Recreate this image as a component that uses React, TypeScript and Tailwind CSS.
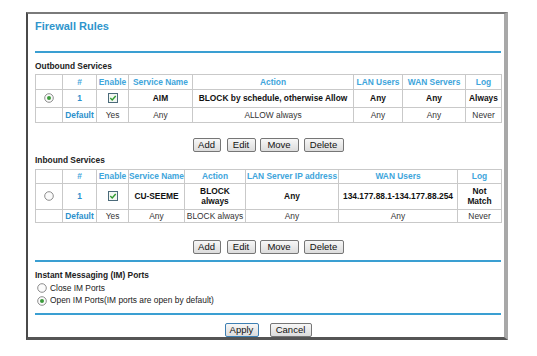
import React from "react";

const F = "font-['Liberation_Sans',Arial,sans-serif]";

function Radio({ checked }: { checked?: boolean }) {
  return (
    <svg width="10" height="10" viewBox="0 0 10 10" className="block">
      <circle cx="5" cy="5" r="4.3" fill="#fbfbfb" stroke="#808080" strokeWidth="0.9" />
      {checked && <circle cx="5" cy="5" r="2" fill="#3b9a3b" />}
    </svg>
  );
}

function Check() {
  return (
    <svg width="10" height="10" viewBox="0 0 10 10" className="block">
      <rect x="0.5" y="0.5" width="9" height="9" fill="#f2f7f2" stroke="#4b6a7a" />
      <path d="M2.3 5.1 L4.2 6.9 L7.7 3" fill="none" stroke="#2f9a2f" strokeWidth="1.4" />
    </svg>
  );
}

function Btn({ children, w, blue, className = "" }: { children: React.ReactNode; w: string; blue?: boolean; className?: string }) {
  return (
    <div
      className={`${w} h-[14px] flex items-center justify-center rounded-[2px] border ${
        blue ? "border-[#3d7fb3]" : "border-[#767676]"
      } bg-gradient-to-b from-[#f7f7f7] to-[#dcdcdc] text-[9.5px] leading-none text-[#111] ${className}`}
    >
      {children}
    </div>
  );
}

const th = "border border-[#c9c9c9] p-0 text-center font-bold text-[#3ea5db] whitespace-nowrap";
const td = "border border-[#c9c9c9] p-0 text-center whitespace-nowrap";

function Buttons() {
  return (
    <div className="flex justify-center">
      <Btn w="w-[28px]">Add</Btn>
      <Btn w="w-[29px]" className="ml-[6px]">Edit</Btn>
      <Btn w="w-[39px]" className="ml-[4px]">Move</Btn>
      <Btn w="w-[40px]" className="ml-[5px]">Delete</Btn>
    </div>
  );
}

export default function App() {
  return (
    <div className={`w-[537px] h-[356px] bg-white ${F} pt-[12px] pl-[26px] overflow-hidden`}>
      <div className="w-[482px] h-[328px] box-border border-l-2 border-l-[#4a4a4a] border-t-2 border-t-[#7a7a7a] border-r-4 border-r-[#a8a8a8] border-b-[3px] border-b-[#555] pl-[7px] pr-[3px] flex flex-col">
        <div className="pt-[6px] text-[11px] leading-[13px] font-bold text-[#2f95cc]">Firewall Rules</div>
        <div className="mt-[18px] h-[2px] bg-[#3a9fd2]" />
        <div className="mt-[8px] text-[8.4px] leading-[10px] font-bold text-[#222]">Outbound Services</div>
        <table className="mt-[3px] w-[466px] border-collapse table-fixed text-[8.4px] leading-[10px]">
          <colgroup>
            <col className="w-[27px]" />
            <col className="w-[34px]" />
            <col className="w-[32px]" />
            <col className="w-[64px]" />
            <col className="w-[161px]" />
            <col className="w-[49px]" />
            <col className="w-[63px]" />
            <col className="w-[36px]" />
          </colgroup>
          <tbody>
            <tr className="h-[15px]">
              <td className={th}></td>
              <td className={th}>#</td>
              <td className={th}>Enable</td>
              <td className={th}>Service Name</td>
              <td className={th}>Action</td>
              <td className={th}>LAN Users</td>
              <td className={th}>WAN Servers</td>
              <td className={th}>Log</td>
            </tr>
            <tr className="h-[18px] font-bold text-[#111]">
              <td className={td}>
                <div className="flex justify-center"><Radio checked /></div>
              </td>
              <td className={`${td} text-[#2b90cc]`}>1</td>
              <td className={td}>
                <div className="flex justify-center"><Check /></div>
              </td>
              <td className={td}>AIM</td>
              <td className={td}>BLOCK by schedule, otherwise Allow</td>
              <td className={td}>Any</td>
              <td className={td}>Any</td>
              <td className={td}>Always</td>
            </tr>
            <tr className="h-[15px] text-[#333]">
              <td className={td}></td>
              <td className={`${td} font-bold text-[#2b90cc]`}>Default</td>
              <td className={td}>Yes</td>
              <td className={td}>Any</td>
              <td className={td}>ALLOW always</td>
              <td className={td}>Any</td>
              <td className={td}>Any</td>
              <td className={td}>Never</td>
            </tr>
          </tbody>
        </table>
        <div className="mt-[15px]">
          <Buttons />
        </div>
        <div className="mt-[3px] text-[8.4px] leading-[10px] font-bold text-[#222]">Inbound Services</div>
        <table className="mt-[4px] w-[466px] border-collapse table-fixed text-[8.4px] leading-[10px]">
          <colgroup>
            <col className="w-[27px]" />
            <col className="w-[34px]" />
            <col className="w-[32px]" />
            <col className="w-[56px]" />
            <col className="w-[61px]" />
            <col className="w-[93px]" />
            <col className="w-[119px]" />
            <col className="w-[44px]" />
          </colgroup>
          <tbody>
            <tr className="h-[14px]">
              <td className={th}></td>
              <td className={th}>#</td>
              <td className={th}>Enable</td>
              <td className={th}>Service Name</td>
              <td className={th}>Action</td>
              <td className={th}>LAN Server IP address</td>
              <td className={th}>WAN Users</td>
              <td className={th}>Log</td>
            </tr>
            <tr className="h-[26px] font-bold text-[#111]">
              <td className={td}>
                <div className="flex justify-center"><Radio /></div>
              </td>
              <td className={`${td} text-[#2b90cc]`}>1</td>
              <td className={td}>
                <div className="flex justify-center"><Check /></div>
              </td>
              <td className={td}>CU-SEEME</td>
              <td className={td}>
                BLOCK
                <br />
                always
              </td>
              <td className={td}>Any</td>
              <td className={td}>134.177.88.1-134.177.88.254</td>
              <td className={td}>
                Not
                <br />
                Match
              </td>
            </tr>
            <tr className="h-[13px] text-[#333]">
              <td className={td}></td>
              <td className={`${td} font-bold text-[#2b90cc]`}>Default</td>
              <td className={td}>Yes</td>
              <td className={td}>Any</td>
              <td className={td}>BLOCK always</td>
              <td className={td}>Any</td>
              <td className={td}>Any</td>
              <td className={td}>Never</td>
            </tr>
          </tbody>
        </table>
        <div className="mt-[17px]">
          <Buttons />
        </div>
        <div className="mt-[6px] h-[2px] bg-[#3a9fd2]" />
        <div className="mt-[8px] text-[8.4px] leading-[10px] font-bold text-[#222]">Instant Messaging (IM) Ports</div>
        <div className="mt-[2px] h-[13px] flex items-center text-[8.4px] text-[#222]">
          <div className="ml-[2px] mr-[3px]"><Radio /></div>
          Close IM Ports
        </div>
        <div className="h-[13px] flex items-center text-[8.4px] text-[#222]">
          <div className="ml-[2px] mr-[3px]"><Radio checked /></div>
          Open IM Ports(IM ports are open by default)
        </div>
        <div className="mt-[6px] h-[2px] bg-[#3a9fd2]" />
        <div className="mt-[8px] flex justify-center">
          <Btn w="w-[34px]" blue>Apply</Btn>
          <Btn w="w-[42px]" className="ml-[11px]">Cancel</Btn>
        </div>
      </div>
    </div>
  );
}
